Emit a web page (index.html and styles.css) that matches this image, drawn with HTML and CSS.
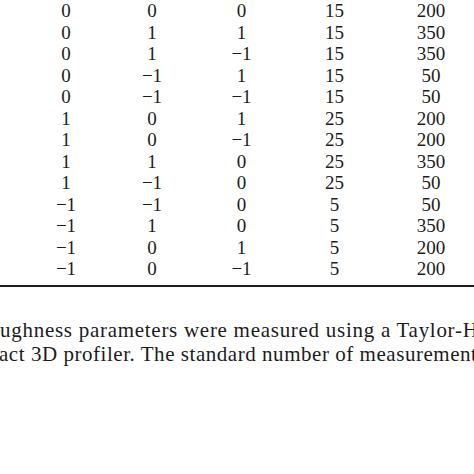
FILE: index.html
```html
<!DOCTYPE html>
<html>
<head>
<meta charset="utf-8">
<link rel="stylesheet" href="styles.css">
</head>
<body>
<div class="page">
  <div class="table">
    <span>0</span><span>0</span><span>0</span><span>15</span><span>200</span>
    <span>0</span><span>1</span><span>1</span><span>15</span><span>350</span>
    <span>0</span><span>1</span><span>−1</span><span>15</span><span>350</span>
    <span>0</span><span>−1</span><span>1</span><span>15</span><span>50</span>
    <span>0</span><span>−1</span><span>−1</span><span>15</span><span>50</span>
    <span>1</span><span>0</span><span>1</span><span>25</span><span>200</span>
    <span>1</span><span>0</span><span>−1</span><span>25</span><span>200</span>
    <span>1</span><span>1</span><span>0</span><span>25</span><span>350</span>
    <span>1</span><span>−1</span><span>0</span><span>25</span><span>50</span>
    <span>−1</span><span>−1</span><span>0</span><span>5</span><span>50</span>
    <span>−1</span><span>1</span><span>0</span><span>5</span><span>350</span>
    <span>−1</span><span>0</span><span>1</span><span>5</span><span>200</span>
    <span>−1</span><span>0</span><span>−1</span><span>5</span><span>200</span>
  </div>
  <div class="caption">
    <div class="line first">ughness parameters were measured using a Taylor-H</div>
    <div class="line second">act 3D profiler. The standard number of measurement</div>
  </div>
</div>
</body>
</html>
```

FILE: styles.css
```css
html, body {
  margin: 0;
  padding: 0;
  background: #fff;
}
body {
  width: 474px;
  height: 474px;
  overflow: hidden;
}
.page {
  font-family: "Liberation Serif", "Times New Roman", serif;
  font-size: 19px;
  color: #1c1c1c;
}
.table {
  display: grid;
  grid-template-columns: 86px 86px 93px 93px 100px;
  grid-auto-rows: 21.5px;
  line-height: 21.5px;
  padding-left: 23px;
  padding-bottom: 5px;
  border-bottom: 2px solid #1c1c1c;
  text-align: center;
}
.caption {
  padding-top: 31px;
  font-size: 21px;
  line-height: 24px;
}
.line {
  white-space: nowrap;
}
.first {
  letter-spacing: 0.72px;
}
.second {
  margin-left: -1px;
  letter-spacing: 0.54px;
}
```
